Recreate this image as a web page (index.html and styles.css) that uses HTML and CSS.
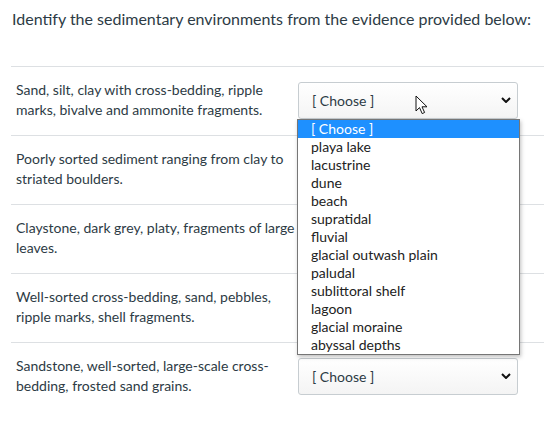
FILE: index.html
```html
<!DOCTYPE html>
<html>
<head>
<meta charset="utf-8">
<link rel="stylesheet" href="styles.css">
</head>
<body>
<div class="question">
  <p class="title">Identify the sedimentary environments from the evidence provided below:</p>
  <div class="rows">
    <div class="row">
      <div class="text">Sand, silt, clay with cross-bedding, ripple marks, bivalve and ammonite fragments.</div>
      <div class="select-wrap">
        <div class="select"><span>[ Choose ]</span><svg class="chev" width="10" height="6" viewBox="0 0 10 6"><path d="M1 1 L5 5 L9 1" fill="none" stroke="#111" stroke-width="2"/></svg></div>
        <svg class="cursor" width="14" height="20" viewBox="0 0 14 20"><path d="M1 1 L1 16 L4.5 12.6 L7.2 18.6 L9.6 17.5 L7 11.8 L12 11.8 Z" fill="#fff" stroke="#111" stroke-width="1" stroke-linejoin="round"/></svg>
        <ul class="list">
          <li class="sel">[ Choose ]</li>
          <li>playa lake</li>
          <li>lacustrine</li>
          <li>dune</li>
          <li>beach</li>
          <li>supratidal</li>
          <li>fluvial</li>
          <li>glacial outwash plain</li>
          <li>paludal</li>
          <li>sublittoral shelf</li>
          <li>lagoon</li>
          <li>glacial moraine</li>
          <li>abyssal depths</li>
        </ul>
      </div>
    </div>
    <div class="row">
      <div class="text">Poorly sorted sediment ranging from clay to striated boulders.</div>
      <div class="select-wrap"><div class="select"><span>[ Choose ]</span><svg class="chev" width="10" height="6" viewBox="0 0 10 6"><path d="M1 1 L5 5 L9 1" fill="none" stroke="#111" stroke-width="2"/></svg></div></div>
    </div>
    <div class="row">
      <div class="text">Claystone, dark grey, platy, fragments of large leaves.</div>
      <div class="select-wrap"><div class="select"><span>[ Choose ]</span><svg class="chev" width="10" height="6" viewBox="0 0 10 6"><path d="M1 1 L5 5 L9 1" fill="none" stroke="#111" stroke-width="2"/></svg></div></div>
    </div>
    <div class="row">
      <div class="text">Well-sorted cross-bedding, sand, pebbles, ripple marks, shell fragments.</div>
      <div class="select-wrap"><div class="select"><span>[ Choose ]</span><svg class="chev" width="10" height="6" viewBox="0 0 10 6"><path d="M1 1 L5 5 L9 1" fill="none" stroke="#111" stroke-width="2"/></svg></div></div>
    </div>
    <div class="row last">
      <div class="text">Sandstone, well-sorted, large-scale cross-bedding, frosted sand grains.</div>
      <div class="select-wrap"><div class="select"><span>[ Choose ]</span><svg class="chev" width="10" height="6" viewBox="0 0 10 6"><path d="M1 1 L5 5 L9 1" fill="none" stroke="#111" stroke-width="2"/></svg></div></div>
    </div>
  </div>
</div>
</body>
</html>
```

FILE: styles.css
```css
html, body {
  margin: 0;
  padding: 0;
  background: #fff;
}
body {
  font-family: Lato, "Open Sans", sans-serif;
  color: #2d3b45;
  width: 544px;
  height: 426px;
  overflow: hidden;
}
.question {
  padding-left: 11px;
}
.title {
  margin: 0;
  padding: 9px 0 0 1px;
  font-size: 16px;
  line-height: 20px;
  height: 66px;
  box-sizing: border-box;
}
.rows {
  display: flex;
  flex-direction: column;
}
.row {
  display: flex;
  align-items: center;
  border-top: 1px solid #dde0e3;
  padding: 13px 0 15px 5px;
}
.text {
  width: 282px;
  font-size: 14px;
  line-height: 20px;
}
.select-wrap {
  position: relative;
  width: 220px;
}
.select {
  box-sizing: border-box;
  height: 37px;
  border: 1px solid #c7cdd1;
  border-radius: 3px;
  background: linear-gradient(#fff, #f4f4f4);
  display: flex;
  align-items: center;
  justify-content: space-between;
  padding: 0 6px 0 13px;
  font-size: 14px;
  color: #2d3b45;
}
.chev {
  display: block;
}
.cursor {
  position: absolute;
  left: 117px;
  top: 13px;
}
.list {
  position: absolute;
  left: -1px;
  top: 37px;
  width: 221px;
  margin: 0;
  padding: 0;
  list-style: none;
  background: #fff;
  border: 1px solid #767676;
  box-shadow: 1px 2px 4px rgba(0,0,0,0.25);
  z-index: 5;
}
.list li {
  height: 18px;
  line-height: 18px;
  font-size: 14px;
  padding-left: 13px;
  color: #222;
}
.list li.sel {
  background: #1e90ff;
  color: #fff;
}
```
